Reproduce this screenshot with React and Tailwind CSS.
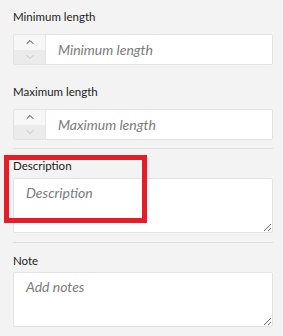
import { ChevronUp, ChevronDown } from 'lucide-react';

function Stepper() {
  return (
    <div className="flex flex-col w-[32px] shrink-0 border-r border-[#e6e6e6]">
      <div className="flex-1 flex items-center justify-center bg-[#f7f7f7]">
        <ChevronUp size={12} strokeWidth={2} className="text-[#333]" />
      </div>
      <div className="flex-1 flex items-center justify-center bg-[#ebebeb]">
        <ChevronDown size={12} strokeWidth={2} className="text-[#c4c4c4]" />
      </div>
    </div>
  );
}

function NumberField({ label, placeholder, top }) {
  return (
    <div className={top}>
      <label className="block text-[11.5px] leading-[14px] text-[#222]">{label}</label>
      <div className="mt-[10px] flex h-[31px] bg-white border border-[#e3e3e3] rounded-[2px] overflow-hidden">
        <Stepper />
        <input
          placeholder={placeholder}
          className="flex-1 min-w-0 pl-[12px] text-[14px] italic outline-none placeholder:text-[#7b7b7b] bg-white"
        />
      </div>
    </div>
  );
}

function TextField({ label, placeholder, top, gap }) {
  return (
    <div className={top}>
      <label className="block text-[11.5px] leading-[14px] text-[#222]">{label}</label>
      <textarea
        placeholder={placeholder}
        className={`${gap} block w-full h-[55px] bg-white border border-[#e3e3e3] rounded-[2px] px-[12px] py-[3px] text-[14px] italic outline-none placeholder:text-[#7b7b7b]`}
      />
    </div>
  );
}

export default function App() {
  return (
    <div
      className="relative w-[283px] h-[336px] bg-[#f3f3f3] overflow-hidden pl-[13px] pr-[10px] pt-[10px]"
      style={{ fontFamily: 'Lato, "Open Sans", sans-serif' }}
    >
      <NumberField label="Minimum length" placeholder="Minimum length" />
      <NumberField label="Maximum length" placeholder="Maximum length" top="mt-[20px]" />
      <div className="mt-[8px] h-px bg-[#dedede]" />
      <TextField label="Description" placeholder="Description" top="mt-[10px]" gap="mt-[5px]" />
      <div className="mt-[9px] h-px bg-[#dedede]" />
      <TextField label="Note" placeholder="Add notes" top="mt-[11px]" gap="mt-[4px]" />

      {/* highlight */}
      <div className="absolute left-[4px] top-[155px] w-[143px] h-[68px] border-[5px] border-[#e31e27]" />
    </div>
  );
}
